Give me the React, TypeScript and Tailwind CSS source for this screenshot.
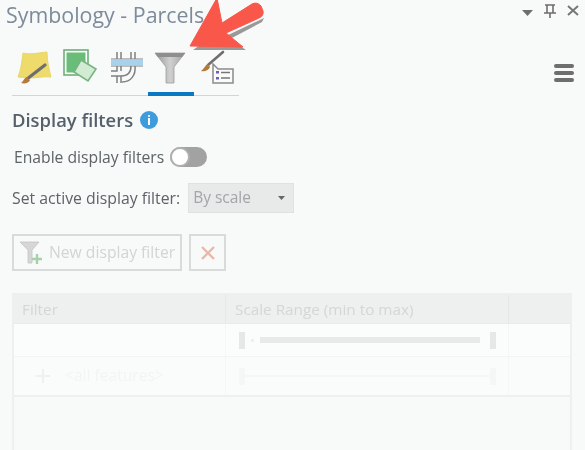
import React from "react";

const font = { fontFamily: '"Open Sans", "Noto Sans", sans-serif' };

function PolygonIcon() {
  return (
    <svg width="36" height="36" viewBox="0 0 36 36">
      <path d="M6 3 C12 5 20 3 30 2 C30 11 32 19 34 27 C26 26 20 28 13 28 L1 27 C4 20 5 11 6 3Z" fill="#eedb6c" stroke="#e8d766" />
      <path d="M28 15 L10 29" stroke="#6f6f6f" strokeWidth="3.2" strokeLinecap="round" />
      <path d="M10 27 C7 28 6 32 4 33 C8 34 12 33 13 30Z" fill="#b5793a" />
    </svg>
  );
}

function SymbolIcon() {
  return (
    <svg width="36" height="34" viewBox="0 0 36 34">
      <rect x="1" y="1" width="24" height="25" fill="#fff" stroke="#6fae78" strokeWidth="1.6" />
      <rect x="3.5" y="3.5" width="19" height="20" fill="#69bd78" />
      <path d="M18 11 L33 20 L25 32 L11 23Z" fill="#d2ebd3" stroke="#76b580" strokeWidth="1.6" />
    </svg>
  );
}

function RoadIcon() {
  return (
    <svg width="32" height="32" viewBox="0 0 32 32" fill="none" stroke="#808080" strokeWidth="1.5">
      <path d="M6 0 V7 M10 0 V7 M20 0 V7 M24 0 V7" />
      <path d="M0 7 H32 M0 14 H32" strokeWidth="1.2" />
      <path d="M0 10.5 H32" stroke="#a9d2ea" strokeWidth="6" />
      <path d="M6 14 V19 H0 M0 24 H10 M10 24 V31 M6 24 V31" />
      <path d="M10 14 V19 M20 14 C20 20 17 24 10 24" />
      <path d="M24 14 C25 23 20 30 11 30" />
    </svg>
  );
}

function FunnelIcon() {
  return (
    <svg width="32" height="34" viewBox="0 0 32 34">
      <defs>
        <linearGradient id="fg" x1="0" x2="1" y1="0" y2="0">
          <stop offset="0" stopColor="#969696" />
          <stop offset="0.5" stopColor="#d0d0d0" />
          <stop offset="1" stopColor="#a2a2a2" />
        </linearGradient>
      </defs>
      <path d="M1 2 H31 L20 16 V32 H12 V16Z" fill="url(#fg)" stroke="#a0a0a0" strokeWidth="0.8" />
      <path d="M1 2 H31 L28 6 H4Z" fill="#8e8e8e" />
    </svg>
  );
}

function BrushListIcon() {
  return (
    <svg width="36" height="36" viewBox="0 0 36 36" fill="none">
      <path d="M23 2 L8 15" stroke="#6e6e6e" strokeWidth="2.6" strokeLinecap="round" />
      <path d="M8 14 C5 15 4 19 1 21 C5 22 9 20 10 17Z" fill="#b5793a" />
      <path d="M13 14 L18 19 H33 V33 H13Z" fill="#fbfbfb" stroke="#8b8b8b" strokeWidth="1.5" />
      <rect x="16" y="21" width="3" height="2.5" fill="#6b62b8" />
      <rect x="16" y="27" width="3" height="2.5" fill="#6b62b8" />
      <path d="M21 22.5 H30 M21 28 H30" stroke="#777" strokeWidth="1.6" />
    </svg>
  );
}

function FilterAddIcon() {
  return (
    <svg width="24" height="26" viewBox="0 0 24 26">
      <path d="M1 2 H20 L13 10 V23 H9 V10Z" fill="#d6d6d6" stroke="#c4c4c4" strokeWidth="0.8" />
      <path d="M18 14 V24 M13 19 H23" stroke="#a8d0aa" strokeWidth="2.4" />
    </svg>
  );
}

export default function App() {
  return (
    <div className="relative w-[585px] h-[450px] overflow-hidden bg-[#f8f9f9] blur-[0.6px]" style={font}>
      <header className="flex items-start justify-between h-[33px] pl-[6px] pr-[6px]">
        <h1 className="text-[21.4px] leading-[30px] text-[#7d8b9b] whitespace-nowrap">Symbology - Parcels</h1>
        <div className="flex items-start gap-[11px] mt-[4px]">
          <svg className="mt-[6px]" width="11" height="6" viewBox="0 0 11 6"><path d="M0 0 H11 L5.5 6Z" fill="#6e6e6e" /></svg>
          <svg width="12" height="14" viewBox="0 0 12 14" fill="none" stroke="#6e6e6e" strokeWidth="1.6"><path d="M1 1 H11 M3 1 V9 M9 1 V9 M0 9 H12 M6 9 V14" /></svg>
          <svg className="mt-[1px]" width="12" height="11" viewBox="0 0 12 11" stroke="#777" strokeWidth="2"><path d="M1 1 L11 10 M11 1 L1 10" /></svg>
        </div>
      </header>

      <div className="flex items-end justify-between pr-[12px]">
        <div className="ml-[12px] w-[227px] h-[63px] border-b border-[#d2d4d6] flex items-start pt-[17px] relative">
          <div className="ml-[5px] w-[36px]"><PolygonIcon /></div>
          <div className="ml-[10px] -mt-[1px] w-[36px]"><SymbolIcon /></div>
          <div className="ml-[12px] mt-[2px] w-[32px]"><RoadIcon /></div>
          <div className="ml-[11px] mt-[1px] w-[32px]"><FunnelIcon /></div>
          <div className="ml-[14px] w-[36px]"><BrushListIcon /></div>
          <div className="absolute left-[136px] bottom-[-1px] w-[46px] h-[4px] bg-[#0a79c4]" />
        </div>
        <div className="flex flex-col gap-[3px] mb-[14px] mr-[-1px]">
          <div className="w-[20px] h-[4px] rounded-sm bg-[#6e6e6e]" />
          <div className="w-[20px] h-[4px] rounded-sm bg-[#6e6e6e]" />
          <div className="w-[20px] h-[4px] rounded-sm bg-[#6e6e6e]" />
        </div>
      </div>

      <div className="flex items-center gap-[7px] ml-[12px] mt-[11px] h-[26px]">
        <h2 className="text-[18.4px] leading-[24px] font-semibold text-[#55606b] whitespace-nowrap">Display filters</h2>
        <span className="flex items-center justify-center w-[18px] h-[18px] rounded-full bg-[#3f9cdc] text-white text-[13px] font-bold leading-none">i</span>
      </div>

      <div className="flex items-center ml-[14px] mt-[12px] h-[24px] gap-[6px]">
        <span className="text-[15.7px] leading-[20px] text-[#5d6368] whitespace-nowrap">Enable display filters</span>
        <div className="flex items-center w-[37px] h-[20px] rounded-full bg-[#a2a2a2]">
          <div className="w-[20px] h-[20px] rounded-full bg-white border-2 border-[#b0b0b0]" />
        </div>
      </div>

      <div className="flex items-center ml-[12px] mt-[14px] h-[30px] gap-[8px]">
        <span className="text-[15.8px] leading-[20px] text-[#5d6368] whitespace-nowrap">Set active display filter:</span>
        <div className="flex items-center justify-between w-[106px] h-[30px] bg-[#e8e9e9] border border-[#e0e1e1] pl-[4px] pr-[8px]">
          <span className="text-[15.5px] text-[#a3a6a9]">By scale</span>
          <svg width="7" height="4" viewBox="0 0 7 4"><path d="M0 0 H7 L3.5 4Z" fill="#666" /></svg>
        </div>
      </div>

      <div className="flex items-center ml-[12px] mt-[21px] gap-[7px]">
        <div className="flex items-center w-[170px] h-[37px] border-2 border-[#d9dada] pl-[5px] gap-[6px]">
          <FilterAddIcon />
          <span className="text-[15.7px] text-[#d2d4d5] whitespace-nowrap">New display filter</span>
        </div>
        <div className="flex items-center justify-center w-[37px] h-[37px] border-2 border-[#d9dada]">
          <svg width="14" height="14" viewBox="0 0 14 14" stroke="#e8b9ab" strokeWidth="2.4"><path d="M1 1 L13 13 M13 1 L1 13" /></svg>
        </div>
      </div>

      <div className="ml-[12px] mt-[22px] w-[560px] h-[200px] border-x-2 border-t-2 border-[#eeefef]">
        <div className="flex h-[29px] bg-[#eeefef] border-b border-[#e9eaea] text-[15.3px] text-[#d5d6d6]">
          <div className="w-[212px] pl-[8px] flex items-center border-r border-[#e6e7e7]">Filter</div>
          <div className="w-[283px] pl-[9px] flex items-center border-r border-[#e6e7e7] whitespace-nowrap">Scale Range (min to max)</div>
          <div className="flex-1" />
        </div>
        <div className="flex h-[33px] bg-[#fbfcfc] border-b border-[#f3f4f4]">
          <div className="w-[212px] border-r border-[#f5f6f6]" />
          <div className="w-[283px] border-r border-[#f5f6f6] flex items-center pl-[13px] pr-[12px]">
            <div className="w-[6px] h-[17px] bg-[#e6e7e7]" />
            <div className="w-[3px] h-[3px] ml-[6px] bg-[#eeefef]" />
            <div className="flex-1 h-[6px] ml-[6px] bg-[#e8e9e9]" />
            <div className="w-[6px] h-[17px] ml-[10px] bg-[#e6e7e7]" />
          </div>
          <div className="flex-1" />
        </div>
        <div className="flex h-[40px] bg-[#fafbfb] border-b-2 border-[#eeefef]">
          <div className="w-[212px] border-r border-[#f5f6f6] flex items-center pl-[22px] gap-[15px] text-[15.6px] text-[#f3f4f4]">
            <svg width="14" height="14" viewBox="0 0 14 14" stroke="#eff0f0" strokeWidth="2"><path d="M7 0 V14 M0 7 H14" /></svg>
            <span className="whitespace-nowrap">&lt;all features&gt;</span>
          </div>
          <div className="w-[283px] border-r border-[#f5f6f6] flex items-center pl-[13px] pr-[12px]">
            <div className="w-[6px] h-[17px] bg-[#f5f6f6]" />
            <div className="flex-1 h-[2px] bg-[#f5f6f6]" />
            <div className="w-[6px] h-[17px] bg-[#f5f6f6]" />
          </div>
          <div className="flex-1" />
        </div>
      </div>

      <svg className="absolute left-[185px] top-0" width="85" height="56" viewBox="0 0 85 56">
        <path d="M7 47 L60 47 L44 36 L76 19 L78 15 L40 33 L14 42Z" fill="#4a4a4a" opacity="0.55" transform="translate(1 3)" />
        <path d="M5 46 L32 -2 L37 23 L67 4 Q72 1.5 76 6 L78 11 Q79 16 74 18 L41 33 L58 47Z" fill="#f8574a" stroke="#f8574a" strokeLinejoin="round" />
      </svg>
    </div>
  );
}
